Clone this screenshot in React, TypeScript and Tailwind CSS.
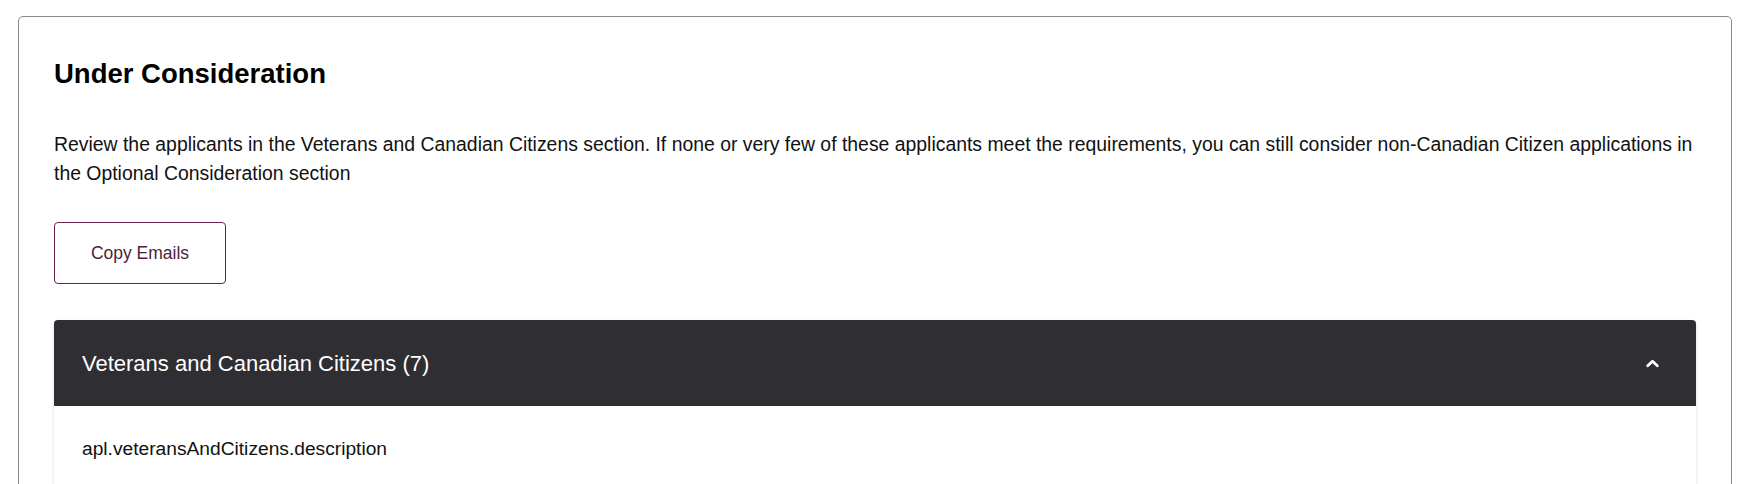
import React, { useState } from "react";

const FONT = "font-['Liberation_Sans',Arial,sans-serif]";

function ChevronUp({ open }: { open: boolean }) {
  return (
    <svg
      viewBox="0 0 24 24"
      className={open ? "w-[21px] h-[21px]" : "w-[21px] h-[21px] rotate-180"}
      fill="none"
      stroke="currentColor"
      strokeWidth={3.2}
      strokeLinecap="round"
      strokeLinejoin="round"
    >
      <polyline points="6.5,14.5 12,9.5 17.5,14.5" />
    </svg>
  );
}

function ApplicantSection({
  title,
  count,
  description,
}: {
  title: string;
  count: number;
  description: string;
}) {
  const [open, setOpen] = useState(true);

  return (
    <div className="rounded-[4px] bg-white shadow-[0_2px_1px_-1px_rgba(0,0,0,0.2),0_1px_1px_0_rgba(0,0,0,0.14),0_1px_3px_0_rgba(0,0,0,0.12)]">
      {/* Section header */}
      <button
        type="button"
        onClick={() => setOpen(!open)}
        className="flex w-full h-[86px] items-center justify-between rounded-t-[4px] bg-[#2f2e33] pl-[28px] pr-[33px] text-left text-white"
      >
        <span className="text-[22px]">
          {title} ({count})
        </span>
        <ChevronUp open={open} />
      </button>

      {/* Section body */}
      {open && (
        <div className="px-[28px] pt-[28px] pb-[28px]">
          <p className="text-[19.2px] leading-[29px] text-[#111]">{description}</p>
        </div>
      )}
    </div>
  );
}

export default function App() {
  return (
    <div className={`${FONT} min-h-screen bg-white pt-[16px] pl-[18px] pr-[10px]`}>
      <div className="rounded-[5px] border border-[#8a8a8a] bg-white px-[35px] pt-[41px] pb-[40px]">
        <h1 className="text-[27.5px] leading-[32px] font-bold text-black">Under Consideration</h1>

        <p className="mt-[40px] text-[19.4px] leading-[29px] text-[#111]">
          Review the applicants in the Veterans and Canadian Citizens section. If none or very few of
          these applicants meet the requirements, you can still consider non-Canadian Citizen
          applications in the Optional Consideration section
        </p>

        <button
          type="button"
          className="mt-[34px] flex h-[62px] w-[172px] items-center justify-center rounded-[4px] border border-[#6b1f4f] bg-white text-[17.5px] text-[#4d1f3c]"
        >
          Copy Emails
        </button>

        <div className="mt-[36px]">
          <ApplicantSection
            title="Veterans and Canadian Citizens"
            count={7}
            description="apl.veteransAndCitizens.description"
          />
        </div>
      </div>
    </div>
  );
}
